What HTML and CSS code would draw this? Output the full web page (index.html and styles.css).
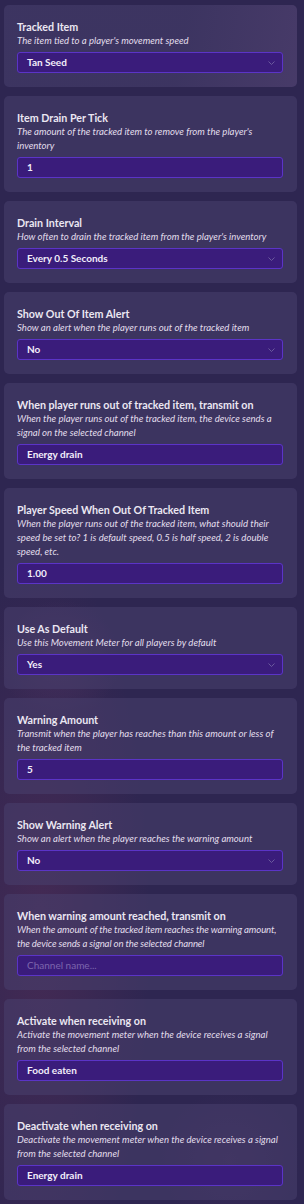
FILE: index.html
```html
<!DOCTYPE html>
<html lang="en">
<head>
    <meta charset="UTF-8">
    <meta name="viewport" content="width=device-width, initial-scale=1.0">
    <title>Movement Meter</title>
    <link rel="stylesheet" href="styles.css">
</head>
<body>

<div class="panel">
    <!-- Tracked item -->
    <div class="card">
        <div class="label">Tracked Item</div>
        <div class="desc">The item tied to a player's movement speed</div>
        <div class="field select">Tan Seed <span class="chev"><svg width="7" height="4" viewBox="0 0 7 4"><path d="M0.5 0.5 L3.5 3.5 L6.5 0.5" fill="none" stroke="currentColor" stroke-width="0.9"/></svg></span></div>
    </div>

    <div class="card">
        <div class="label">Item Drain Per Tick</div>
        <div class="desc">The amount of the tracked item to remove from the player's inventory</div>
        <div class="field">1</div>
    </div>

    <div class="card">
        <div class="label">Drain Interval</div>
        <div class="desc">How often to drain the tracked item from the player's inventory</div>
        <div class="field select">Every 0.5 Seconds <span class="chev"><svg width="7" height="4" viewBox="0 0 7 4"><path d="M0.5 0.5 L3.5 3.5 L6.5 0.5" fill="none" stroke="currentColor" stroke-width="0.9"/></svg></span></div>
    </div>

    <div class="card">
        <div class="label">Show Out Of Item Alert</div>
        <div class="desc">Show an alert when the player runs out of the tracked item</div>
        <div class="field select">No <span class="chev"><svg width="7" height="4" viewBox="0 0 7 4"><path d="M0.5 0.5 L3.5 3.5 L6.5 0.5" fill="none" stroke="currentColor" stroke-width="0.9"/></svg></span></div>
    </div>

    <div class="card">
        <div class="label">When player runs out of tracked item, transmit on</div>
        <div class="desc">When the player runs out of the tracked item, the device sends a signal on the selected channel</div>
        <div class="field">Energy drain</div>
    </div>

    <div class="card">
        <div class="label">Player Speed When Out Of Tracked Item</div>
        <div class="desc">When the player runs out of the tracked item, what should their speed be set to? 1 is default speed, 0.5 is half speed, 2 is double speed, etc.</div>
        <div class="field">1.00</div>
    </div>

    <div class="card">
        <div class="label">Use As Default</div>
        <div class="desc">Use this Movement Meter for all players by default</div>
        <div class="field select">Yes <span class="chev"><svg width="7" height="4" viewBox="0 0 7 4"><path d="M0.5 0.5 L3.5 3.5 L6.5 0.5" fill="none" stroke="currentColor" stroke-width="0.9"/></svg></span></div>
    </div>

    <div class="card">
        <div class="label">Warning Amount</div>
        <div class="desc">Transmit when the player has reaches than this amount or less of the tracked item</div>
        <div class="field">5</div>
    </div>

    <div class="card">
        <div class="label">Show Warning Alert</div>
        <div class="desc">Show an alert when the player reaches the warning amount</div>
        <div class="field select">No <span class="chev"><svg width="7" height="4" viewBox="0 0 7 4"><path d="M0.5 0.5 L3.5 3.5 L6.5 0.5" fill="none" stroke="currentColor" stroke-width="0.9"/></svg></span></div>
    </div>

    <div class="card">
        <div class="label">When warning amount reached, transmit on</div>
        <div class="desc tight">When the amount of the tracked item reaches the warning amount, the device sends a signal on the selected channel</div>
        <div class="field placeholder">Channel name...</div>
    </div>

    <div class="card">
        <div class="label">Activate when receiving on</div>
        <div class="desc">Activate the movement meter when the device receives a signal from the selected channel</div>
        <div class="field">Food eaten</div>
    </div>

    <div class="card">
        <div class="label">Deactivate when receiving on</div>
        <div class="desc">Deactivate the movement meter when the device receives a signal from the selected channel</div>
        <div class="field">Energy drain</div>
    </div>
</div>

</body>
</html>
```

FILE: styles.css
```css
/* base */
body {
    margin: 0;
    font-family: Lato, "Noto Sans", sans-serif;
    color: #ece8f4;
    background-color: #2e2651;
    background-image:
        radial-gradient(circle at 60px 660px, rgba(90, 60, 110, 0.35) 0, rgba(90, 60, 110, 0) 60px),
        radial-gradient(ellipse at 40px 930px, rgba(110, 50, 90, 0.35) 0, rgba(110, 50, 90, 0) 110px),
        radial-gradient(circle at 230px 1160px, rgba(80, 50, 100, 0.3) 0, rgba(80, 50, 100, 0) 70px);
    min-height: 1204px;
}
.panel {
    display: flex;
    flex-direction: column;
    gap: 9px;
    padding: 5px 7px 0 4px;
}
.card {
    background: rgba(72, 64, 110, 0.55);
    border-radius: 5px;
    padding: 14px 14px 14px 13px;
}
.card:first-child {
    background: linear-gradient(100deg, rgba(72, 64, 110, 0.55) 60%, rgba(88, 72, 120, 0.6));
}
.label {
    font-size: 10.7px;
    font-weight: 700;
    line-height: 15px;
    color: #ebe7f2;
}
.desc {
    font-size: 9.6px;
    font-style: italic;
    line-height: 14px;
    color: #e2deec;
}
.desc.tight {
    letter-spacing: -0.12px;
    margin-right: -2px;
}
.field {
    position: relative;
    margin-top: 4px;
    height: 21px;
    box-sizing: border-box;
    border: 1px solid #5b34c7;
    border-radius: 3px;
    background: #3a1c7b;
    padding: 0 9px;
    font-size: 10px;
    font-weight: 700;
    line-height: 19px;
    color: #f2eefa;
}
.field.placeholder {
    color: #7d66ad;
    font-weight: 400;
}
.chev {
    position: absolute;
    right: 7px;
    top: 8px;
    color: #6f60a2;
    display: flex;
}
```
